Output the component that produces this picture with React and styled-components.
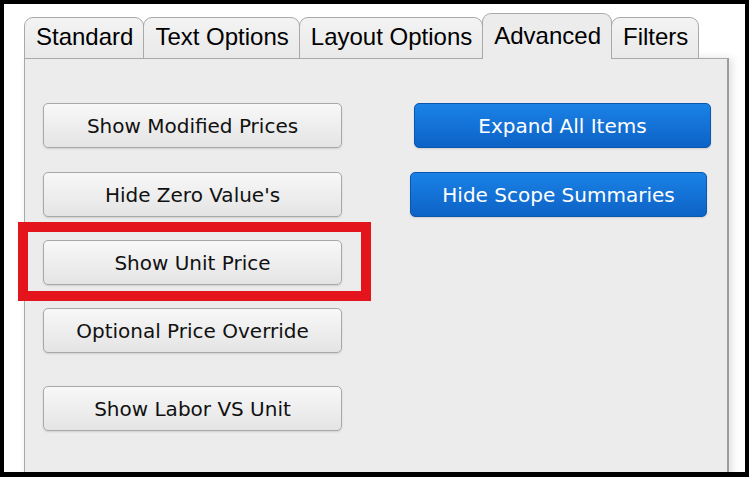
import styled, { createGlobalStyle } from "styled-components";

const GlobalStyle = createGlobalStyle`
  html, body {
    margin: 0;
    padding: 0;
    background: #000;
  }
`;

const Frame = styled.div`
  box-sizing: border-box;
  width: 749px;
  height: 477px;
  border: 4px solid #000;
  border-bottom-width: 5px;
  background: #fff;
  padding: 10px 0 0 20px;
  overflow: hidden;
`;

const TabBar = styled.div`
  display: flex;
  align-items: flex-end;
  height: 45px;
  position: relative;
  z-index: 1;
`;

const Tab = styled.div`
  box-sizing: border-box;
  height: ${(p) => (p.$active ? "46px" : "42px")};
  padding: ${(p) => (p.$active ? "6px" : "3px")} 10px 0 11px;
  margin-right: -1px;
  border: 1px solid #a9a9a9;
  border-bottom: ${(p) => (p.$active ? "none" : "1px solid #a9a9a9")};
  border-radius: 9px 9px 0 0;
  background: ${(p) =>
    p.$active ? "#ececec" : "linear-gradient(#f3f3f3, #e9e9e9)"};
  font-family: "Liberation Sans", Arial, sans-serif;
  font-size: 24px;
  line-height: 32px;
  color: #000;
  white-space: nowrap;
`;

const Panel = styled.div`
  box-sizing: border-box;
  width: 705px;
  height: 440px;
  margin-top: -1px;
  border: 1px solid #a9a9a9;
  border-right: 2px solid #9c9c9c;
  background: #ececec;
  box-shadow: 3px 0 8px rgba(0, 0, 0, 0.12);
  padding: 44px 0 0 18px;
  display: flex;
  gap: 68px;
`;

const Column = styled.div`
  display: flex;
  flex-direction: column;
  align-items: flex-start;
`;

const Button = styled.div`
  position: relative;
  box-sizing: border-box;
  width: ${(p) => p.$width || 299}px;
  height: 45px;
  margin-left: ${(p) => p.$shift || 0}px;
  margin-bottom: ${(p) => p.$after ?? 23}px;
  border: 1px solid ${(p) => (p.$primary ? "#0b57ad" : "#a8a8a8")};
  border-radius: 5px;
  background: ${(p) =>
    p.$primary
      ? "linear-gradient(#1b82e6, #0d62c6)"
      : "linear-gradient(#f8f8f8, #e4e4e4)"};
  box-shadow: 0 1px 2px rgba(0, 0, 0, 0.12);
  display: flex;
  align-items: center;
  justify-content: center;
  font-family: "DejaVu Sans", Verdana, sans-serif;
  font-size: 20px;
  color: ${(p) => (p.$primary ? "#fff" : "#111")};
  white-space: nowrap;
`;

const Highlight = styled.div`
  position: absolute;
  top: -19px;
  left: -26px;
  right: -30px;
  bottom: -17px;
  border: 10px solid #e3141b;
  pointer-events: none;
`;

const tabs = ["Standard", "Text Options", "Layout Options", "Advanced", "Filters"];

export default function App() {
  return (
    <>
      <GlobalStyle />
      <Frame>
        <TabBar>
          {tabs.map((t) => (
            <Tab key={t} $active={t === "Advanced"}>
              {t}
            </Tab>
          ))}
        </TabBar>
        <Panel>
          <Column>
            <Button $after={24}>Show Modified Prices</Button>
            <Button>Hide Zero Value's</Button>
            <Button>
              Show Unit Price
              <Highlight />
            </Button>
            <Button $after={33}>Optional Price Override</Button>
            <Button>Show Labor VS Unit</Button>
          </Column>
          <Column>
            <Button $primary $width={297} $shift={4} $after={24}>
              Expand All Items
            </Button>
            <Button $primary $width={297}>
              Hide Scope Summaries
            </Button>
          </Column>
        </Panel>
      </Frame>
    </>
  );
}
